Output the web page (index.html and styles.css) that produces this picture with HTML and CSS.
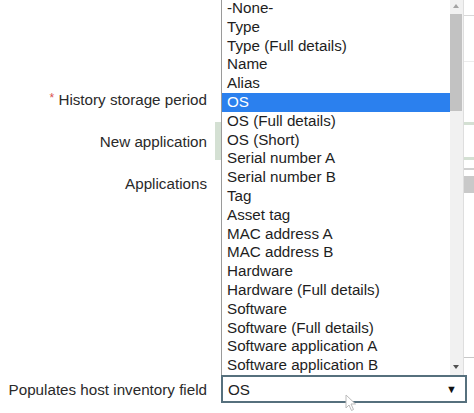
FILE: index.html
```html
<!DOCTYPE html>
<html lang="en">

<head>
    <meta charset="UTF-8">
    <meta name="viewport" content="width=device-width, initial-scale=1.0">
    <title>Item inventory field</title>
    <link rel="stylesheet" href="styles.css">
</head>

<body>
    <div class="form">
        <div class="row row-top">
            <div class="label"></div>
            <div class="field"><div class="box-top"></div></div>
        </div>
        <div class="row row-history">
            <div class="label"><span class="req">*</span> History storage period</div>
            <div class="field"><div class="short-input"></div></div>
        </div>
        <div class="row row-newapp">
            <div class="label">New application</div>
            <div class="field"><div class="green-input"></div></div>
        </div>
        <div class="row row-apps">
            <div class="label">Applications</div>
            <div class="field">
                <div class="apps-box">
                    <div class="apps-head"></div>
                </div>
            </div>
        </div>
        <div class="row row-inventory">
            <div class="label">Populates host inventory field</div>
            <div class="field">
                <div class="select">
                    <span>OS</span>
                    <span class="arrow">&#9660;</span>
                </div>
            </div>
        </div>
    </div>

    <div class="dropdown">
        <ul class="options">
            <li>-None-</li>
            <li>Type</li>
            <li>Type (Full details)</li>
            <li>Name</li>
            <li>Alias</li>
            <li class="selected">OS</li>
            <li>OS (Full details)</li>
            <li>OS (Short)</li>
            <li>Serial number A</li>
            <li>Serial number B</li>
            <li>Tag</li>
            <li>Asset tag</li>
            <li>MAC address A</li>
            <li>MAC address B</li>
            <li>Hardware</li>
            <li>Hardware (Full details)</li>
            <li>Software</li>
            <li>Software (Full details)</li>
            <li>Software application A</li>
            <li>Software application B</li>
        </ul>
        <div class="scrollbar">
            <div class="sb-btn up"></div>
            <div class="sb-track"><div class="sb-thumb"></div></div>
            <div class="sb-btn down"></div>
        </div>
    </div>

    <svg class="cursor" width="12" height="18" viewBox="0 0 12 18">
        <path d="M1 1 L1 14 L4 11 L6.5 16.5 L8.5 15.5 L6 10 L10.5 10 Z" fill="#fff" stroke="#bbb" stroke-width="1"/>
    </svg>
</body>

</html>
```

FILE: styles.css
```css
body {
    margin: 0;
    font-family: "Liberation Sans", Arial, sans-serif;
    font-size: 15.2px;
    color: #222;
    background-color: #fff;
    overflow: hidden;
}

.form {
    display: flex;
    flex-direction: column;
}

.row {
    display: grid;
    grid-template-columns: 207px 1fr;
    column-gap: 14px;
    align-items: center;
}

.label {
    text-align: right;
    white-space: nowrap;
    color: #2a2a2a;
}

.req {
    color: #d9534f;
    font-size: 12px;
    vertical-align: 3px;
}

.row-top {
    height: 62px;
    align-items: start;
}

.box-top {
    margin-top: 15px;
    height: 45px;
    border-top: 1px solid #d8d8d8;
    border-bottom: 1px solid #ececec;
}

.row-history {
    margin-top: 18px;
    height: 38px;
}

.short-input {
    width: 100px;
    height: 30px;
    border: 1px solid #ccc;
}

.row-newapp {
    margin-top: 4px;
    height: 38px;
}

.green-input {
    margin-left: -6px;
    height: 32px;
    border: 3px solid #d4e0d3;
    border-left-width: 6px;
    border-right: none;
}

.row-apps {
    margin-top: 8px;
    align-items: start;
}

.row-apps .label {
    margin-top: 7px;
}

.apps-box {
    height: 181px;
    border-top: 2px solid #d0d0d0;
    border-bottom: 1px solid #c8c8c8;
    padding-top: 6px;
}

.apps-head {
    height: 17px;
    background-color: #c9c9c9;
}

.row-inventory {
    margin-top: 17px;
    height: 28px;
}

.select {
    height: 24px;
    border: 2px solid #56707d;
    display: flex;
    align-items: center;
    justify-content: space-between;
    padding: 0 8px 0 5px;
    box-sizing: content-box;
    width: 229px;
}

.select .arrow {
    font-size: 11px;
    color: #111;
}

.dropdown {
    position: absolute;
    left: 221px;
    top: -1px;
    width: 241px;
    height: 376px;
    background-color: #fff;
    border-left: 1px solid #9a9a9a;
    border-right: 1px solid #dedede;
    display: flex;
}

.options {
    list-style: none;
    margin: 0;
    padding: 0;
    flex: 1;
}

.options li {
    height: 18.8px;
    line-height: 18.8px;
    padding-left: 5px;
    color: #1e1e1e;
    white-space: nowrap;
}

.options .selected {
    background-color: #2b80ee;
    color: #fff;
}

.scrollbar {
    width: 13px;
    display: flex;
    flex-direction: column;
    background-color: #f1f1f1;
}

.sb-btn {
    height: 15px;
    position: relative;
}

.sb-btn::after {
    content: "";
    position: absolute;
    left: 3px;
    border-left: 3.5px solid transparent;
    border-right: 3.5px solid transparent;
}

.sb-btn.up::after {
    top: 5px;
    border-bottom: 4px solid #a3a3a3;
}

.sb-btn.down {
    height: 14px;
}

.sb-btn.down::after {
    top: 4px;
    border-top: 4px solid #505050;
}

.sb-track {
    flex: 1;
    padding-right: 1px;
}

.sb-thumb {
    height: 97px;
    background-color: #c2c2c2;
}

.cursor {
    position: absolute;
    left: 345px;
    top: 394px;
}
```
